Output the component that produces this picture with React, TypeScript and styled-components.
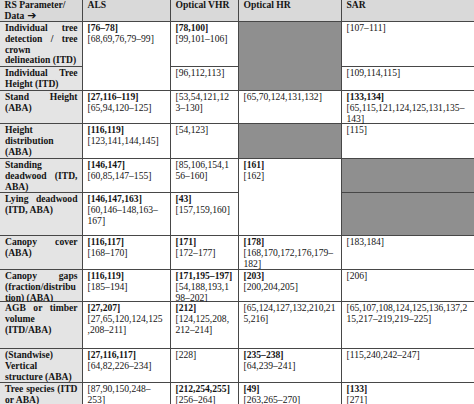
import React from 'react';
import styled, { createGlobalStyle } from 'styled-components';

const GlobalStyle = createGlobalStyle`
  html, body { margin: 0; padding: 0; background: #ffffff; }
  body { width: 474px; height: 404px; overflow: hidden; }
`;

type Tone = 'head' | 'label' | 'data' | 'shade';

const tones: Record<Tone, string> = {
  head: '#d9d9d9',
  label: '#e4e4e4',
  data: '#ffffff',
  shade: '#8f8f8f',
};

const Table = styled.div`
  display: grid;
  width: 476px;
  grid-template-columns: 82px 87px 67px 102px 134px;
  grid-template-rows: 21px 44px 23px 32px 34px 33px 42px 33px 31px 46px 33px 40px;
  gap: 1px;
  background: #474747;
  font-family: "Liberation Serif", "Times New Roman", serif;
  font-size: 9.6px;
  line-height: 10.8px;
  color: #141414;
`;

const Cell = styled.div<{ $tone: Tone; $span?: number }>`
  grid-row: span ${(p) => p.$span ?? 1};
  background: ${(p) => tones[p.$tone]};
  padding: ${(p) =>
    p.$tone === 'label' ? '1px 4.5px 0 5px' : p.$tone === 'head' ? '0 4px 0 4.5px' : '1px 4px 0 4.5px'};
  font-weight: ${(p) => (p.$tone === 'head' || p.$tone === 'label' ? 700 : 400)};
  min-width: 0;
`;

const Line = styled.span<{ $bold?: boolean; $justify?: boolean }>`
  display: block;
  font-weight: ${(p) => (p.$bold ? 700 : 'inherit')};
  text-align: ${(p) => (p.$justify ? 'justify' : 'left')};
  text-align-last: ${(p) => (p.$justify ? 'justify' : 'left')};
  white-space: ${(p) => (p.$justify ? 'normal' : 'nowrap')};
`;

const Arrow = styled.span`
  font-family: "DejaVu Sans", sans-serif;
  font-size: 11px;
  line-height: 10px;
  font-weight: 700;
  margin-left: 3px;
`;

type Spec = { tone: Tone; lines?: React.ReactNode[]; bold?: number; span?: number };

const H = (lines: React.ReactNode[]): Spec => ({ tone: 'head', lines });
const L = (lines: string[]): Spec => ({ tone: 'label', lines });
const D = (lines: string[], bold = 0, span?: number): Spec => ({ tone: 'data', lines, bold, span });
const S = (span?: number): Spec => ({ tone: 'shade', span });

const cells: Spec[] = [
  H(['RS Parameter/', <>Data<Arrow>{'\u2794'}</Arrow></>]),
  H(['ALS']),
  H(['Optical VHR']),
  H(['Optical HR']),
  H(['SAR']),

  L(['Individual tree', 'detection / tree', 'crown', 'delineation (ITD)']),
  D(['[76–78]', '[68,69,76,79–99]'], 1, 2),
  D(['[78,100]', '[99,101–106]'], 1),
  S(2),
  D(['[107–111]']),

  L(['Individual Tree', 'Height (ITD)']),
  D(['[96,112,113]']),
  D(['[109,114,115]']),

  L(['Stand Height', '(ABA)']),
  D(['[27,116–119]', '[65,94,120–125]'], 1),
  D(['[53,54,121,12', '3–130]']),
  D(['[65,70,124,131,132]']),
  D(['[133,134]', '[65,115,121,124,125,131,135–', '143]'], 1),

  L(['Height', 'distribution', '(ABA)']),
  D(['[116,119]', '[123,141,144,145]'], 1),
  D(['[54,123]']),
  S(),
  D(['[115]']),

  L(['Standing', 'deadwood (ITD,', 'ABA)']),
  D(['[146,147]', '[60,85,147–155]'], 1),
  D(['[85,106,154,1', '56–160]']),
  D(['[161]', '[162]'], 1, 2),
  S(),

  L(['Lying deadwood', '(ITD, ABA)']),
  D(['[146,147,163]', '[60,146–148,163–', '167]'], 1),
  D(['[43]', '[157,159,160]'], 1),
  S(),

  L(['Canopy cover', '(ABA)']),
  D(['[116,117]', '[168–170]'], 1),
  D(['[171]', '[172–177]'], 1),
  D(['[178]', '[168,170,172,176,179–', '182]'], 1),
  D(['[183,184]']),

  L(['Canopy gaps', '(fraction/distribu', 'tion) (ABA)']),
  D(['[116,119]', '[185–194]'], 1),
  D(['[171,195–197]', '[54,188,193,1', '98–202]'], 1),
  D(['[203]', '[200,204,205]'], 1),
  D(['[206]']),

  L(['AGB or timber', 'volume', '(ITD/ABA)']),
  D(['[27,207]', '[27,65,120,124,125', ',208–211]'], 1),
  D(['[212]', '[124,125,208,', '212–214]'], 1),
  D(['[65,124,127,132,210,21', '5,216]']),
  D(['[65,107,108,124,125,136,137,2', '15,217–219,219–225]']),

  L(['(Standwise)', 'Vertical', 'structure (ABA)']),
  D(['[27,116,117]', '[64,82,226–234]'], 1),
  D(['[228]']),
  D(['[235–238]', '[64,239–241]'], 1),
  D(['[115,240,242–247]']),

  L(['Tree species (ITD', 'or ABA)']),
  D(['[87,90,150,248–', '253]']),
  D(['[212,254,255]', '[256–264]'], 1),
  D(['[49]', '[263,265–270]'], 1),
  D(['[133]', '[271]'], 1),
];

export default function App() {
  return (
    <>
      <GlobalStyle />
      <Table>
        {cells.map((c, i) => (
          <Cell key={i} $tone={c.tone} $span={c.span}>
            {(c.lines ?? []).map((text, j, arr) => (
              <Line
                key={j}
                $bold={j < (c.bold ?? 0)}
                $justify={c.tone === 'label' && j < arr.length - 1}
              >
                {text}
              </Line>
            ))}
          </Cell>
        ))}
      </Table>
    </>
  );
}
